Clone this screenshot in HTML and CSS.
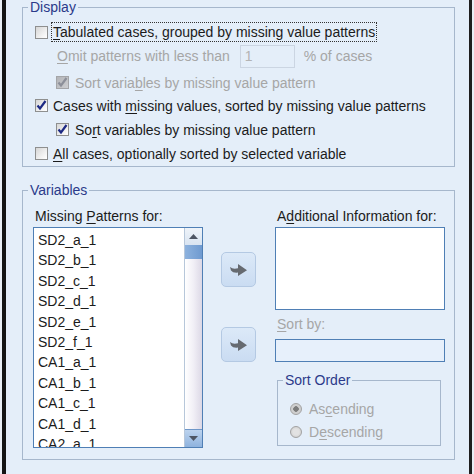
FILE: index.html
```html
<!DOCTYPE html>
<html lang="en">
<head>
  <meta charset="UTF-8" />
  <title>Missing Value Patterns</title>
  <link rel="stylesheet" href="styles.css">
</head>
<body>
  <div class="window">
    <fieldset class="group display">
      <legend>Display</legend>
      <div class="display-body">
        <div class="row r1">
          <span class="check"></span>
          <span class="focus"><u>T</u>abulated cases, grouped by missing value patterns</span>
        </div>
        <div class="row r2 off">
          <span class="omit"><u>O</u>mit patterns with less than</span>
          <span class="spin">1</span>
          <span class="pct">% of cases</span>
        </div>
        <div class="row r3 sub off">
          <span class="check on dis">
            <svg viewBox="0 0 13 13"><path d="M2.5 6.5 L5 9.5 L10.5 2" /></svg>
          </span>
          <span>Sort varia<u>b</u>les by missing value pattern</span>
        </div>
        <div class="row r4">
          <span class="check on">
            <svg viewBox="0 0 13 13"><path d="M2.5 6.5 L5 9.5 L10.5 2" /></svg>
          </span>
          <span>Cases with <u>m</u>issing values, sorted by missing value patterns</span>
        </div>
        <div class="row r5 sub">
          <span class="check on">
            <svg viewBox="0 0 13 13"><path d="M2.5 6.5 L5 9.5 L10.5 2" /></svg>
          </span>
          <span>So<u>r</u>t variables by missing value pattern</span>
        </div>
        <div class="row r6">
          <span class="check"></span>
          <span><u>A</u>ll cases, optionally sorted by selected variable</span>
        </div>
      </div>
    </fieldset>

    <fieldset class="group variables">
      <legend>Variables</legend>
      <div class="var-body">
        <div class="col left">
          <div class="label">Missing <u>P</u>atterns for:</div>
          <div class="list">
            <div class="items">
              <div class="item">SD2_a_1</div>
              <div class="item">SD2_b_1</div>
              <div class="item">SD2_c_1</div>
              <div class="item">SD2_d_1</div>
              <div class="item">SD2_e_1</div>
              <div class="item">SD2_f_1</div>
              <div class="item">CA1_a_1</div>
              <div class="item">CA1_b_1</div>
              <div class="item">CA1_c_1</div>
              <div class="item">CA1_d_1</div>
              <div class="item">CA2_a_1</div>
            </div>
            <div class="scrollbar">
              <div class="sb-btn up">
                <svg viewBox="0 0 9 5"><path d="M0 5 L4.5 0 L9 5 Z" /></svg>
              </div>
              <div class="sb-thumb"></div>
              <div class="sb-track"></div>
              <div class="sb-btn down">
                <svg viewBox="0 0 9 5"><path d="M0 0 L9 0 L4.5 5 Z" /></svg>
              </div>
            </div>
          </div>
        </div>

        <div class="col middle">
          <button class="move first">
            <svg viewBox="0 0 17 12"><path d="M0 3 Q3 5.6 8 4.2 L8 0 L17 6.2 L8 12 L8 8.6 Q3 9.2 1 6.4 Z" /></svg>
          </button>
          <button class="move second">
            <svg viewBox="0 0 17 12"><path d="M0 3 Q3 5.6 8 4.2 L8 0 L17 6.2 L8 12 L8 8.6 Q3 9.2 1 6.4 Z" /></svg>
          </button>
        </div>

        <div class="col right">
          <div class="label">A<u>d</u>ditional Information for:</div>
          <div class="box info"></div>
          <div class="label off sortby-label"><u>S</u>ort by:</div>
          <div class="box sortby"></div>
          <fieldset class="group order">
            <legend>Sort Order</legend>
            <div class="order-body">
              <div class="radio-row off">
                <span class="radio sel"></span>
                <span>As<u>c</u>ending</span>
              </div>
              <div class="radio-row off">
                <span class="radio"></span>
                <span>D<u>e</u>scending</span>
              </div>
            </div>
          </fieldset>
        </div>
      </div>
    </fieldset>
  </div>
</body>
</html>
```

FILE: styles.css
```css
body {
  margin: 0;
  background: #e9eef5;
  font-family: "Liberation Sans", Arial, sans-serif;
  font-size: 14px;
  color: #1b1b1b;
}
u {
  text-underline-offset: 2px;
}
.window {
  display: flex;
  flex-direction: column;
  margin-left: 2px;
  width: 470px;
  height: 474px;
  box-sizing: border-box;
  border-left: 4px solid #141414;
  border-right: 3px solid #1e1e1e;
  background: #e4eef9;
  overflow: hidden;
}
.group {
  margin: 0;
  padding: 0;
  border: 1px solid #a6b7cc;
  min-width: 0;
  box-sizing: border-box;
}
.group legend {
  margin-left: 5px;
  padding: 0 2px;
  line-height: 16px;
  color: #2b3a8a;
}
.display {
  width: 433px;
  margin: -1px 0 0 16px;
}
.display-body {
  padding: 7px 0 2px 12px;
}
.row {
  display: flex;
  align-items: center;
  gap: 5px;
  line-height: 16px;
  white-space: nowrap;
}
.row.sub {
  padding-left: 21px;
  gap: 6px;
}
.r1 { height: 20px; }
.r2 { height: 28px; }
.r3 { height: 25px; }
.r4 { height: 21px; }
.r5 { height: 27px; }
.r6 { height: 21px; }
.off {
  color: #a6a6a6;
}
.check {
  flex: none;
  width: 13px;
  height: 13px;
  box-sizing: border-box;
  border: 1px solid #8e8f8f;
  background: linear-gradient(135deg, #d6d6d6, #f4f4f4 70%, #ffffff);
}
.check svg {
  display: block;
  width: 13px;
  height: 13px;
  margin: -1px;
  overflow: visible;
}
.check path {
  fill: none;
  stroke: #1d2a84;
  stroke-width: 2.2;
}
.check.dis {
  border-color: #a4a5a8;
  background: linear-gradient(135deg, #b3b4b8, #cdced1);
}
.check.dis path {
  stroke: #8c8f99;
}
.focus {
  margin-left: -2px;
  padding: 1px;
  border: 1px dotted #333;
}
.r2 .omit {
  margin-left: 22px;
}
.spin {
  margin-left: 5px;
  width: 55px;
  height: 23px;
  box-sizing: border-box;
  border: 1px solid #cbd5e2;
  padding-left: 4px;
  line-height: 21px;
  color: #b3b3b3;
}
.pct {
  margin-left: 4px;
}
.variables {
  width: 433px;
  margin: 15px 0 0 16px;
}
.var-body {
  display: flex;
  padding: 10px 0 11px 10px;
}
.col {
  display: flex;
  flex-direction: column;
}
.left, .right {
  width: 170px;
}
.label {
  line-height: 16px;
  height: 16px;
  padding-left: 2px;
  margin-bottom: 3px;
  white-space: nowrap;
}
.list {
  display: flex;
  height: 221px;
  box-sizing: border-box;
  border: 1px solid #4f7fb5;
  background: #fff;
}
.items {
  flex: 1;
  overflow: hidden;
  padding: 2px 0 0 4px;
}
.item {
  height: 20.4px;
  line-height: 20.4px;
}
.scrollbar {
  display: flex;
  flex-direction: column;
  width: 17px;
  border-left: 1px solid #b7c7da;
}
.sb-btn {
  height: 17px;
  display: flex;
  align-items: center;
  justify-content: center;
  background: linear-gradient(#eef3f9, #d9e4f1);
}
.sb-btn svg {
  width: 9px;
  height: 5px;
  fill: #4d5563;
}
.sb-btn.down {
  background: linear-gradient(#bcd3ee, #8fb3de);
  border-top: 1px solid #6e96c8;
}
.sb-thumb {
  height: 14px;
  background: linear-gradient(90deg, #8db2de, #6f9ad0);
}
.sb-track {
  flex: 1;
  background: linear-gradient(90deg, #ffffff, #f1eff6 50%, #dcd8e6);
}
.middle {
  width: 35px;
  margin: 0 19px 0 18px;
}
.move {
  width: 35px;
  height: 35px;
  padding: 0;
  border: 1px solid #b4c9e3;
  border-radius: 5px;
  background: linear-gradient(#dce9f8, #cadcf2);
  display: flex;
  align-items: center;
  justify-content: center;
}
.move svg {
  width: 17px;
  height: 12px;
  fill: #666a70;
}
.move.first {
  margin-top: 44px;
}
.move.second {
  margin-top: 40px;
}
.box {
  box-sizing: border-box;
  border: 1px solid #4f7fb5;
}
.info {
  height: 83px;
  background: #fff;
}
.sortby-label {
  margin: 6px 0 7px;
}
.sortby {
  height: 23px;
  background: #e7f0fb;
}
.order {
  width: 164px;
  margin: 10px 0 0 2px;
}
.order-body {
  padding: 9px 0 2px 12px;
}
.radio-row {
  display: flex;
  align-items: center;
  gap: 7px;
  height: 23px;
}
.radio {
  flex: none;
  width: 12px;
  height: 12px;
  box-sizing: border-box;
  border: 1px solid #a2a2a2;
  border-radius: 50%;
  background: radial-gradient(circle, #e2e2e2 40%, #c8c8c8 100%);
}
.radio.sel {
  background: radial-gradient(circle, #7c7c7c 0 2.5px, #cfcfcf 3px);
}
```
